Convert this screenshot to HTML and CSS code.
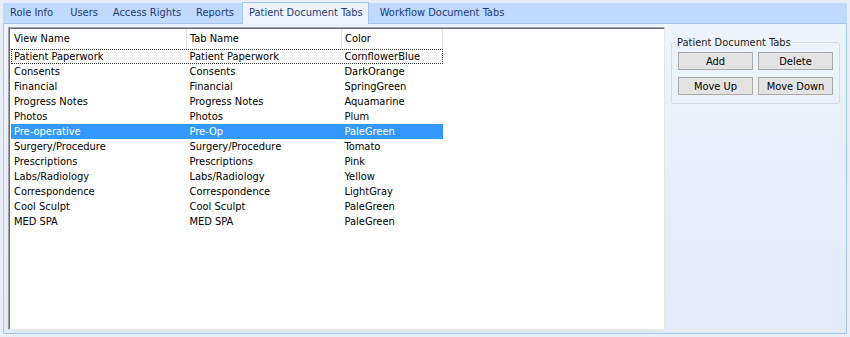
FILE: index.html
```html
<!DOCTYPE html>
<html lang="en">
<head>
    <meta charset="UTF-8">
    <title>Patient Document Tabs</title>
    <link rel="stylesheet" href="styles.css">
</head>
<body>
    <div class="window">
        <div class="tab-strip">
            <div class="tab first">Role Info</div>
            <div class="tab">Users</div>
            <div class="tab">Access Rights</div>
            <div class="tab">Reports</div>
            <div class="tab active">Patient Document Tabs</div>
            <div class="tab">Workflow Document Tabs</div>
        </div>

        <div class="tab-page">
            <div class="list-view">
                <table class="grid">
                    <thead>
                        <tr>
                            <th class="col-view">View Name</th>
                            <th class="col-tab">Tab Name</th>
                            <th class="col-color">Color</th>
                        </tr>
                    </thead>
                    <tbody>
                        <tr class="focused"><td>Patient Paperwork</td><td>Patient Paperwork</td><td>CornflowerBlue</td></tr>
                        <tr><td>Consents</td><td>Consents</td><td>DarkOrange</td></tr>
                        <tr><td>Financial</td><td>Financial</td><td>SpringGreen</td></tr>
                        <tr><td>Progress Notes</td><td>Progress Notes</td><td>Aquamarine</td></tr>
                        <tr><td>Photos</td><td>Photos</td><td>Plum</td></tr>
                        <tr class="selected"><td>Pre-operative</td><td>Pre-Op</td><td>PaleGreen</td></tr>
                        <tr><td>Surgery/Procedure</td><td>Surgery/Procedure</td><td>Tomato</td></tr>
                        <tr><td>Prescriptions</td><td>Prescriptions</td><td>Pink</td></tr>
                        <tr><td>Labs/Radiology</td><td>Labs/Radiology</td><td>Yellow</td></tr>
                        <tr><td>Correspondence</td><td>Correspondence</td><td>LightGray</td></tr>
                        <tr><td>Cool Sculpt</td><td>Cool Sculpt</td><td>PaleGreen</td></tr>
                        <tr><td>MED SPA</td><td>MED SPA</td><td>PaleGreen</td></tr>
                    </tbody>
                </table>
            </div>

            <div class="side">
                <fieldset class="group">
                    <legend>Patient Document Tabs</legend>
                    <div class="buttons">
                        <button class="btn">Add</button>
                        <button class="btn">Delete</button>
                        <button class="btn">Move Up</button>
                        <button class="btn">Move Down</button>
                    </div>
                </fieldset>
            </div>
        </div>
    </div>
</body>
</html>
```

FILE: styles.css
```css
body {
    margin: 0;
    background-color: #e9eff9;
    font-family: 'DejaVu Sans Condensed', 'DejaVu Sans', sans-serif;
    font-size: 11px;
    color: #000;
}

.window {
    width: 850px;
    height: 337px;
    padding: 3px 3px 0 3px;
    box-sizing: border-box;
    display: flex;
    flex-direction: column;
}

.tab-strip {
    display: flex;
    height: 20px;
    background-color: #bfdafc;
    border-bottom: 1px solid #a6c6ee;
}

.tab {
    padding: 0 7px;
    line-height: 20px;
    color: #1e3a78;
    border-right: 1px solid #bfdafc;
}

.tab.first {
    padding-right: 9px;
}

.tab.active {
    background-color: #eef4fd;
    border: 1px solid #a6c6ee;
    border-bottom: none;
    margin-top: -1px;
    margin-bottom: -1px;
    margin-right: 4px;
    height: 21px;
    line-height: 20px;
    padding: 0 5px 0 6px;
}

.tab-page {
    flex: 1;
    display: flex;
    gap: 6px;
    padding: 3px 6px 3px 4px;
    margin-bottom: 3px;
    background: linear-gradient(to bottom, #eef4fd, #e2eaf8);
    border: 1px solid #a6c6ee;
    border-top: none;
}

.list-view {
    width: 656px;
    background-color: #fff;
    border: 1px solid #a0a0a0;
    border-right-color: #e6e6e6;
    border-bottom-color: #e6e6e6;
    box-shadow: inset 1px 1px 0 #6e6e6e;
    padding: 1px 0 0 2px;
}

.grid {
    border-collapse: collapse;
    width: 432px;
}

.grid th {
    font-weight: normal;
    text-align: left;
    height: 20px;
    padding: 0 0 0 3px;
    border-right: 1px solid #e5e5e5;
    line-height: 20px;
}

.col-view {
    width: 172px;
}

.col-tab {
    width: 151px;
}

.grid td {
    height: 15px;
    padding: 0 0 0 3px;
    line-height: 15px;
    white-space: nowrap;
}

.focused {
    outline: 1px dotted #333;
    outline-offset: -1px;
}

.selected td {
    background-color: #3399ff;
    color: #fff;
}

.side {
    padding-top: 9px;
}

.group {
    width: 155px;
    margin: 0;
    padding: 3px 6px 8px 6px;
    border: 1px solid #d5dbe4;
    border-radius: 2px;
}

.group legend {
    padding: 0 1px;
    margin-left: -2px;
    color: #1a1a1a;
}

.buttons {
    display: grid;
    grid-template-columns: 75px 75px;
    column-gap: 5px;
    row-gap: 7px;
}

.btn {
    height: 18px;
    padding: 0;
    font-family: inherit;
    font-size: 11px;
    color: #000;
    background-color: #e3e3e3;
    border: 1px solid #a9a9a9;
    border-radius: 0;
}
```
